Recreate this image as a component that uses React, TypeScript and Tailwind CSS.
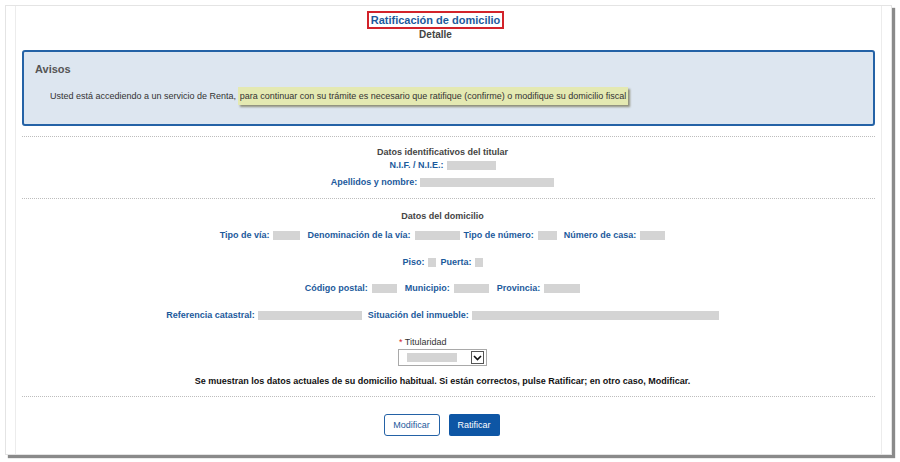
const Blur = ({ w, className = "" }: { w: number; className?: string }) => (
  <span
    className={`inline-block h-[9px] align-middle bg-[#d4d4d4] blur-[0.7px] ${className}`}
    style={{ width: w }}
  />
);

const Label = ({ children }: { children: React.ReactNode }) => (
  <span className="font-bold text-[#1c5a9c]">{children}</span>
);

const Dotted = () => <div className="mx-[6px] border-t border-dotted border-[#bdbdbd]" />;

export default function App() {
  return (
    <div className="w-[900px] h-[462px] bg-white font-['Liberation_Sans',Arial,sans-serif] text-[9px] leading-[11px] text-[#333]">
      <div className="ml-[5px] pt-[5px]">
        <div className="w-[887px] h-[450px] border border-[#e4e4e4] bg-white shadow-[3px_3px_1px_#8a8a8a]">
          <div className="mx-[9px] h-full border-x border-[#ececec] flex flex-col">
            {/* title */}
            <div className="flex flex-col items-center pt-[5px] pr-[26px]">
              <div className="border-2 border-[#d2232a] px-[2px] h-[18px] flex items-center">
                <span className="text-[11px] font-bold text-[#1c5a9c] leading-[12px]">Ratificación de domicilio</span>
              </div>
              <div className="text-[10px] font-bold text-[#444] leading-[11px]">Detalle</div>
            </div>

            {/* avisos */}
            <div className="mx-[6px] mt-[10px] h-[76px] rounded-[3px] border-2 border-[#2462a6] bg-[#dde6f0] px-[11px] pt-[11px]">
              <div className="text-[11px] font-bold leading-[12px] text-[#555]">Avisos</div>
              <div className="mt-[12px] pl-[15px] text-[9px] leading-[12px] text-[#333]">
                Usted está accediendo a un servicio de Renta,{" "}
                <span className="-ml-[1px] inline-block bg-[#e4e9b2] px-[2px] py-[3px] shadow-[2px_2px_2px_#8e8e7a]">
                  para continuar con su trámite es necesario que ratifique (confirme) o modifique su domicilio fiscal
                </span>
              </div>
            </div>

            <div className="mt-[10px]">
              <Dotted />
            </div>

            {/* datos identificativos */}
            <div className="flex flex-col items-center pt-[10px] pr-[12px]">
              <div className="font-bold text-[#444]">Datos identificativos del titular</div>
              <div className="mt-[2px] flex items-center gap-[3px]">
                <Label>N.I.F. / N.I.E.:</Label>
                <Blur w={49} />
              </div>
              <div className="mt-[6px] flex items-center gap-[3px]">
                <Label>Apellidos y nombre:</Label>
                <Blur w={134} />
              </div>
            </div>

            <div className="mt-[10px]">
              <Dotted />
            </div>

            {/* datos domicilio */}
            <div className="flex flex-col items-center pt-[12px] pr-[12px]">
              <div className="font-bold text-[#444]">Datos del domicilio</div>
              <div className="mt-[8px] flex items-center gap-[4px]">
                <Label>Tipo de vía:</Label>
                <Blur w={27} className="mr-[3px]" />
                <Label>Denominación de la vía:</Label>
                <Blur w={45} />
                <Label>Tipo de número:</Label>
                <Blur w={19} className="mr-[3px]" />
                <Label>Número de casa:</Label>
                <Blur w={25} />
              </div>
              <div className="mt-[16px] flex items-center gap-[3px]">
                <Label>Piso:</Label>
                <Blur w={8} className="mr-[2px]" />
                <Label>Puerta:</Label>
                <Blur w={8} />
              </div>
              <div className="mt-[15px] flex items-center gap-[4px]">
                <Label>Código postal:</Label>
                <Blur w={25} className="mr-[4px]" />
                <Label>Municipio:</Label>
                <Blur w={35} className="mr-[4px]" />
                <Label>Provincia:</Label>
                <Blur w={36} />
              </div>
              <div className="mt-[16px] flex items-center gap-[3px]">
                <Label>Referencia catastral:</Label>
                <Blur w={104} className="mr-[3px]" />
                <Label>Situación del inmueble:</Label>
                <Blur w={247} />
              </div>

              {/* titularidad */}
              <div className="mt-[16px] flex flex-col items-start">
                <div className="text-[9px] text-[#333] leading-[11px] pl-[1px]">
                  <span className="text-[#d2232a]">*</span> Titularidad
                </div>
                <div className="mt-[1px] w-[89px] h-[17px] border border-[#a9a9a9] bg-white flex items-center justify-between pl-[8px] pr-[2px]">
                  <Blur w={50} className="h-[7px]" />
                  <span className="w-[13px] h-[13px] border border-[#555] flex items-center justify-center">
                    <svg width="9" height="6" viewBox="0 0 9 6">
                      <path d="M1 1 L4.5 4.5 L8 1" fill="none" stroke="#111" strokeWidth="1.6" />
                    </svg>
                  </span>
                </div>
              </div>

              <div className="mt-[10px] font-bold text-[#111]">
                Se muestran los datos actuales de su domicilio habitual. Si están correctos, pulse Ratificar; en otro caso, Modificar.
              </div>
            </div>

            <div className="mt-[9px]">
              <Dotted />
            </div>

            {/* buttons */}
            <div className="flex justify-center gap-[9px] pt-[17px] pr-[14px]">
              <button className="h-[22px] w-[56px] rounded-[3px] border border-[#2462a6] bg-white text-[9px] text-[#1c5a9c]">
                Modificar
              </button>
              <button className="h-[22px] w-[51px] rounded-[2px] bg-[#0e56a5] text-[9px] text-white">
                Ratificar
              </button>
            </div>
          </div>
        </div>
      </div>
    </div>
  );
}
